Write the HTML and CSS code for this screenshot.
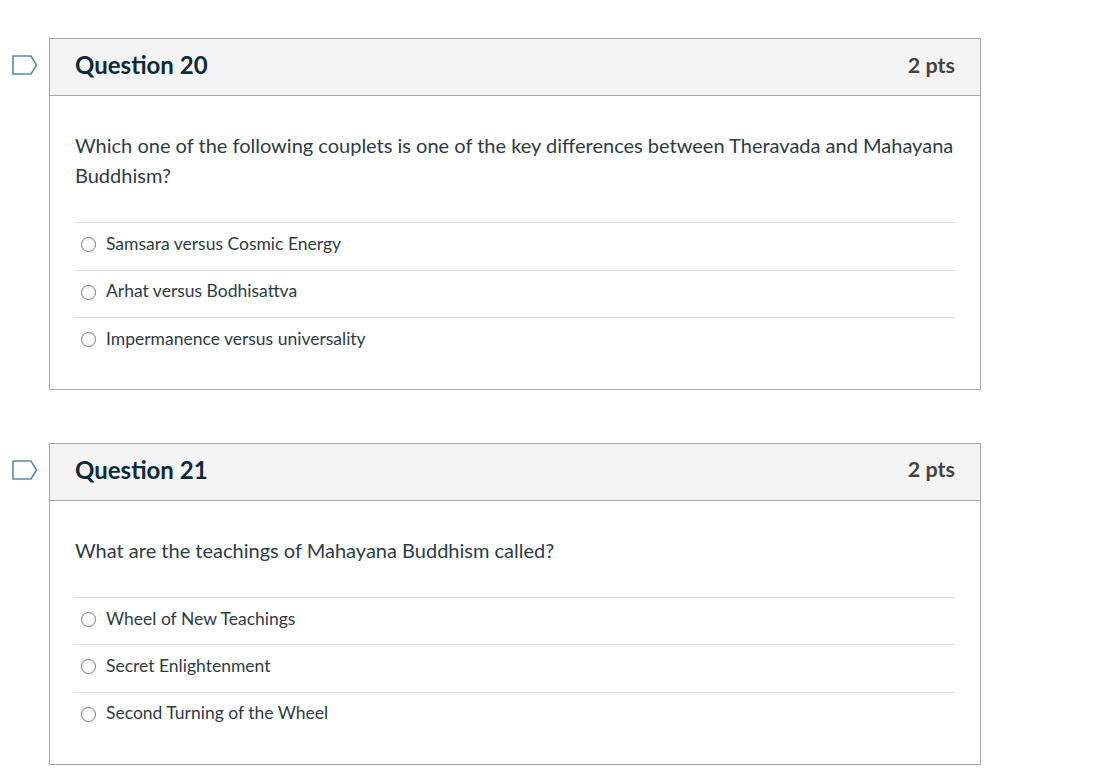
FILE: index.html
```html
<!DOCTYPE html>
<html lang="en">

<head>
  <meta charset="UTF-8" />
  <title>Quiz</title>
  <link rel="stylesheet" href="styles.css">
</head>

<body>
  <div class="question-row">
    <svg class="flag" width="26" height="20" viewBox="0 0 26 20">
      <path d="M1 1H19L24.5 10L19 19H1Z" fill="#fff" stroke="#5d88a8" stroke-width="1.6" />
    </svg>
    <div class="question">
      <div class="question-header">
        <span class="question-name">Question 20</span>
        <span class="question-pts">2 pts</span>
      </div>
      <div class="question-body">
        <p class="question-text">Which one of the following couplets is one of the key differences between Theravada and Mahayana Buddhism?</p>
        <div class="answers">
          <div class="answer"><span class="radio"></span>Samsara versus Cosmic Energy</div>
          <div class="answer"><span class="radio"></span>Arhat versus Bodhisattva</div>
          <div class="answer"><span class="radio"></span>Impermanence versus universality</div>
        </div>
      </div>
    </div>
  </div>

  <div class="question-row">
    <svg class="flag" width="26" height="20" viewBox="0 0 26 20">
      <path d="M1 1H19L24.5 10L19 19H1Z" fill="#fff" stroke="#5d88a8" stroke-width="1.6" />
    </svg>
    <div class="question">
      <div class="question-header">
        <span class="question-name">Question 21</span>
        <span class="question-pts">2 pts</span>
      </div>
      <div class="question-body">
        <p class="question-text">What are the teachings of Mahayana Buddhism called?</p>
        <div class="answers">
          <div class="answer"><span class="radio"></span>Wheel of New Teachings</div>
          <div class="answer"><span class="radio"></span>Secret Enlightenment</div>
          <div class="answer"><span class="radio"></span>Second Turning of the Wheel</div>
        </div>
      </div>
    </div>
  </div>
</body>

</html>
```

FILE: styles.css
```css
* {
  margin: 0;
  padding: 0;
  box-sizing: border-box;
}

body {
  font-family: "Lato", sans-serif;
  background-color: #fff;
  color: #2d3b45;
  padding: 38px 128px 0 12px;
  font-variant-ligatures: common-ligatures;
}

.question-row {
  display: flex;
  align-items: flex-start;
  margin-bottom: 52.8px;
}

.question-row:last-child {
  margin-bottom: 0;
}

.flag {
  flex: none;
  margin-top: 17px;
  margin-right: 11px;
}

.question {
  flex: 1;
  border: 1px solid #a8a8a8;
}

.question-header {
  display: flex;
  justify-content: space-between;
  align-items: center;
  height: 57px;
  padding: 0 25px 5px;
  background-color: #f4f4f4;
  border-bottom: 1px solid #a8a8a8;
}

.question-name {
  font-size: 24px;
  font-weight: 700;
  color: #0e2a3a;
}

.question-pts {
  margin-top: 0.6px;
  font-size: 21.5px;
  font-weight: 700;
  color: #444;
}

.question-body {
  padding: 34px 25px 24.5px;
}

.question-text {
  font-size: 20px;
  line-height: 30px;
  margin-bottom: 32.2px;
}

.answer {
  display: flex;
  align-items: center;
  height: 47.4px;
  padding: 0 0 5.9px 6px;
  font-size: 17.5px;
  border-top: 1px solid #ddd;
}

.radio {
  width: 15px;
  height: 15px;
  margin-top: 2.4px;
  margin-right: 10px;
  border: 1px solid #767676;
  border-radius: 50%;
  background-color: #fff;
}
```
